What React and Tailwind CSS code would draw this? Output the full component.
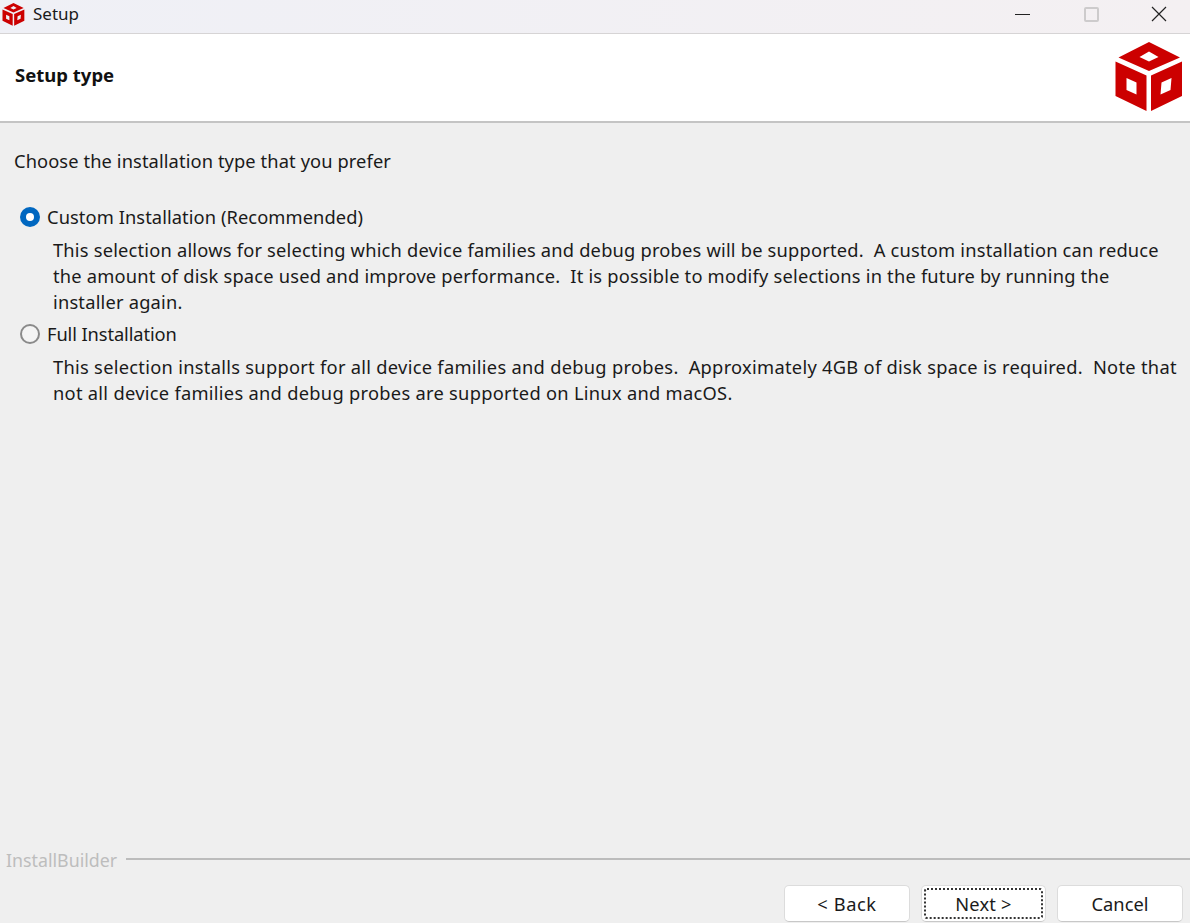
const font = "font-['Noto_Sans','Open_Sans',sans-serif]";

function Cube({ width, height }) {
  return (
    <svg width={width} height={height} viewBox="0 0 68 70" className="block">
      <path fillRule="evenodd" fill="#cc0000" d="M34 0 L65 15.500 L34 29 L3.500 15.500 Z M34 9.500 L24.500 15 L34 19.500 L43.500 15 Z" />
      <path fillRule="evenodd" fill="#cc0000" d="M0.500 19.500 L31.500 33.500 L31.500 69 L0.500 54 Z M11.500 36 L11.500 48 L21.500 52.500 L21.500 40.500 Z" />
      <path fillRule="evenodd" fill="#cc0000" d="M67 19.500 L36 33.500 L36 69 L67 54 Z M56.500 36 L46.500 40.500 L45.500 52.500 L55.500 48 Z" />
    </svg>
  );
}

function Radio({ checked }) {
  return checked ? (
    <span className="w-5 h-5 rounded-full bg-[#0067c0] flex items-center justify-center shrink-0">
      <span className="w-2 h-2 rounded-full bg-white" />
    </span>
  ) : (
    <span className="w-5 h-5 rounded-full border-2 border-[#8a8a8a] bg-[#f4f4f4] shrink-0" />
  );
}

function Option({ checked, label, labelClass, descClass, lines }) {
  return (
    <div>
      <div className="flex items-center gap-[7px] pl-5 h-[26px]">
        <Radio checked={checked} />
        <span className={`text-[#1a1a1a] ${labelClass}`}>{label}</span>
      </div>
      <div className={`pl-[53px] pt-[7px] leading-[26px] text-[#1a1a1a] whitespace-pre ${descClass}`}>
        {lines.map((l) => (
          <div key={l}>{l}</div>
        ))}
      </div>
    </div>
  );
}

function Button({ children, focused, className }) {
  return (
    <button className={`h-[37px] rounded-[5px] bg-white border border-[#dcdcdc] border-b-[#c8c8c8] flex items-center justify-center text-[#1a1a1a] p-[2px] ${className}`}>
      <span className={`w-full h-full flex items-center justify-center rounded-[3px] ${focused ? "border-2 border-dotted border-[#333]" : ""}`}>
        {children}
      </span>
    </button>
  );
}

export default function App() {
  return (
    <div className={`${font} w-[1190px] h-[923px] flex flex-col bg-[#efefef] text-[18.300px] overflow-hidden`}>
      <div className="h-[33px] bg-linear-to-r from-[#eff0f6] to-[#f4f0f2] flex items-center shrink-0 pb-[5px]">
        <div className="pl-[2px] w-[33px]">
          <Cube width={23} height={23} />
        </div>
        <span className="text-[#1a1a1a] text-[17px]">Setup</span>
        <div className="ml-auto flex items-center">
          <div className="w-[70px] flex justify-center">
            <div className="w-[15px] h-px bg-[#222]" />
          </div>
          <div className="w-[68px] flex justify-center">
            <div className="w-[15px] h-[15px] rounded-[2px] border-2 border-[#cdcbcc]" />
          </div>
          <div className="w-[65px] flex justify-center pl-[2px]">
            <svg width="16" height="16" viewBox="0 0 16 16">
              <path d="M1 1 L15 15 M15 1 L1 15" stroke="#222" strokeWidth="1.200" />
            </svg>
          </div>
        </div>
      </div>
      <div className="h-[90px] bg-white border-t border-b-2 border-t-[#d6d4d5] border-b-[#c4c4c4] flex items-center pl-[15px] pr-[7px] shrink-0">
        <span className="font-bold text-[#111] text-[18.500px] -mt-[5px]">Setup type</span>
        <div className="ml-auto -mt-[2px]">
          <Cube width={68} height={70} />
        </div>
      </div>
      <div className="flex-1 flex flex-col min-h-0">
        <div className="pl-[14px] pt-[25px] h-[66px] leading-[26px] text-[#1a1a1a] tracking-[0.1px]">
          Choose the installation type that you prefer
        </div>
        <div className="flex flex-col gap-[6px] pt-[15px]">
          <Option
            checked
            label="Custom Installation (Recommended)"
            labelClass="tracking-[0.08px]"
            descClass="tracking-[0.2px]"
            lines={[
              "This selection allows for selecting which device families and debug probes will be supported.  A custom installation can reduce",
              "the amount of disk space used and improve performance.  It is possible to modify selections in the future by running the",
              "installer again.",
            ]}
          />
          <Option
            label="Full Installation"
            labelClass="tracking-[-0.1px]"
            descClass="tracking-[0.28px]"
            lines={[
              "This selection installs support for all device families and debug probes.  Approximately 4GB of disk space is required.  Note that",
              "not all device families and debug probes are supported on Linux and macOS.",
            ]}
          />
        </div>
        <div className="mt-auto">
          <div className="flex items-center pl-[6px] h-[24px] translate-y-px">
            <span className="text-[#bdbdbd] text-[17.800px]">InstallBuilder</span>
            <div className="ml-[9px] flex-1 h-[2px] bg-[#bcbcbc] -mt-[2px]" />
          </div>
          <div className="flex justify-end gap-[11px] pr-[7px] pt-[14px] pb-px">
            <Button className="w-[126px] tracking-[0.6px]">&lt; Back</Button>
            <Button focused className="w-[125px] tracking-[0.2px]">Next &gt;</Button>
            <Button className="w-[126px]">Cancel</Button>
          </div>
        </div>
      </div>
    </div>
  );
}
